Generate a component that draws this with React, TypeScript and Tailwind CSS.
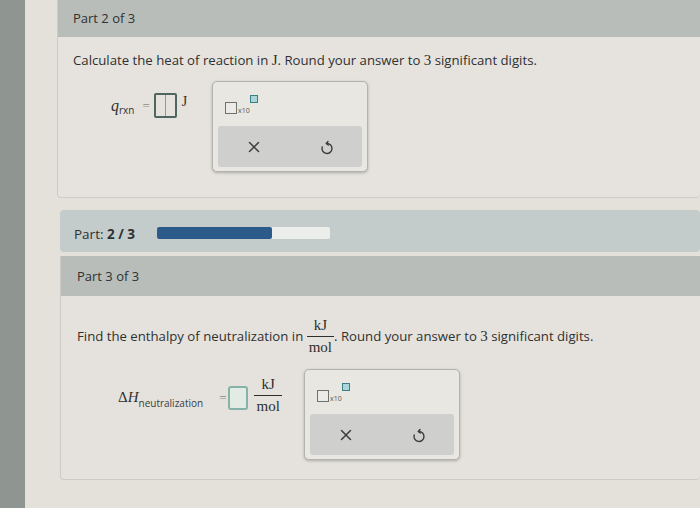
import React from "react";

const sans = { fontFamily: '"Open Sans", "DejaVu Sans", sans-serif' };
const serif = { fontFamily: '"Liberation Serif", "DejaVu Serif", serif' };

function UndoIcon() {
  return (
    <svg width="14" height="16" viewBox="0 0 14 16" fill="none" stroke="#3a3d3c" strokeWidth="1.4" strokeLinecap="round" strokeLinejoin="round">
      <path d="M6.5 4.5 A5 5 0 1 1 2.2 8" />
      <path d="M8 2.5 L6.3 4.5 L8.3 6" />
    </svg>
  );
}

function CloseIcon() {
  return (
    <svg width="12" height="12" viewBox="0 0 12 12" stroke="#3a3d3c" strokeWidth="1.5" strokeLinecap="round">
      <path d="M1.5 1.5 L10.5 10.5 M10.5 1.5 L1.5 10.5" />
    </svg>
  );
}

function TimesTenIcon() {
  return (
    <div className="relative w-[34px] h-[20px]">
      <div className="absolute left-0 bottom-[1px] w-[12px] h-[12px] border border-[#6e7370] bg-[#ecebe7]" />
      <span className="absolute left-[13px] bottom-[1px] text-[7px] leading-none text-[#555]" style={sans}>x10</span>
      <div className="absolute left-[25px] top-0 w-[8px] h-[8px] border border-[#3d7f86] bg-[#a9d6d8]" />
    </div>
  );
}

function ToolBox() {
  return (
    <div className="w-[156px] h-[91px] rounded-[5px] border border-[#b3b4b0] bg-[#e9e7e2] shadow-[0_1px_3px_rgba(0,0,0,0.25)] flex flex-col px-[5px] pb-[4px]">
      <div className="flex-1 flex items-center pl-[7px] pt-[2px]">
        <TimesTenIcon />
      </div>
      <div className="h-[41px] rounded-[3px] bg-[#cfd0cd] flex items-center justify-between pl-[30px] pr-[28px]">
        <CloseIcon />
        <UndoIcon />
      </div>
    </div>
  );
}

function Frac({ top, bottom }: { top: string; bottom: string }) {
  return (
    <span className="inline-flex flex-col items-center leading-none text-[#2d2f2e]" style={serif}>
      <span className="text-[15px] px-[2px] pb-[3px]">{top}</span>
      <span className="h-px w-full bg-[#2d2f2e]" />
      <span className="text-[15px] px-[2px] pt-[3px]">{bottom}</span>
    </span>
  );
}

export default function App() {
  return (
    <div className="w-[700px] h-[508px] flex bg-[#e4e1db] overflow-hidden text-[#2f3130]" style={sans}>
      <div className="w-[25px] shrink-0 bg-[#8f9591]" />
      <div className="flex-1 flex flex-col">
        {/* Part 2 card */}
        <div className="ml-[32px] h-[198px] flex flex-col rounded-b-[4px] border-b border-l border-[#cfcbc4] bg-[#e6e3de]">
          <div className="h-[37px] bg-[#b9bdba] flex items-center pl-[15px] text-[13px]">Part 2 of 3</div>
          <div className="flex-1 flex flex-col pl-[15px] pt-[14px]">
            <p className="text-[13.2px] leading-[18px]">
              Calculate the heat of reaction in <span className="text-[15px]" style={serif}>J</span>. Round your answer to <span className="text-[15px]" style={serif}>3</span> significant digits.
            </p>
            <div className="flex items-start mt-[12px]">
              <div className="w-[139px] flex items-center pl-[38px] pt-[12px]">
                <span className="italic text-[16px]" style={serif}>q</span>
                <span className="text-[10px] mt-[9px]">rxn</span>
                <span className="text-[#8a8d8a] text-[13px] ml-[8px] mr-[4px]" style={serif}>=</span>
                <span className="w-[23px] h-[25px] border-2 border-[#4d6660] rounded-[2px] flex justify-center">
                  <span className="w-px h-full bg-[#8d9c98]" />
                </span>
                <span className="text-[14px] ml-[5px] -mt-[8px]" style={serif}>J</span>
              </div>
              <ToolBox />
            </div>
          </div>
        </div>

        {/* Progress bar */}
        <div className="ml-[35px] mt-[12px] h-[42px] rounded-[4px] bg-[#c3cbcb] flex items-center pl-[14px] pt-[6px]">
          <span className="text-[13.5px]">Part: <b>2 / 3</b></span>
          <div className="ml-[22px] w-[173px] h-[12px] bg-[#eceeec] rounded-[2px] -mt-[2px]">
            <div className="h-full rounded-[2px] bg-[#2b5a8b]" style={{ width: "66.6%" }} />
          </div>
        </div>

        {/* Part 3 card */}
        <div className="ml-[35px] mt-[4px] h-[224px] flex flex-col rounded-b-[4px] border-b border-l border-[#cfcbc4] bg-[#e5e2dd]">
          <div className="h-[40px] bg-[#b8bdba] flex items-center pl-[16px] pt-[2px] text-[13px]">Part 3 of 3</div>
          <div className="flex-1 flex flex-col pl-[16px] pt-[22px]">
            <div className="flex items-center text-[13.2px]">
              <span>Find the enthalpy of neutralization in&nbsp;</span>
              <Frac top="kJ" bottom="mol" />
              <span>. Round your answer to <span className="text-[15px]" style={serif}>3</span> significant digits.</span>
            </div>
            <div className="flex items-start mt-[4px]">
              <div className="w-[227px] flex items-center pl-[41px] pt-[12px]">
                <span className="text-[15px]" style={serif}>Δ<i>H</i></span>
                <span className="text-[10px] mt-[12px] text-[#3a3c3b]">neutralization</span>
                <span className="text-[#8a8d8a] text-[13px] ml-[16px] mr-[2px]" style={serif}>=</span>
                <span className="w-[20px] h-[24px] border-2 border-[#86b3a9] bg-[#e3ebe5] rounded-[3px]" />
                <span className="ml-[6px] mb-[10px]"><Frac top="kJ" bottom="mol" /></span>
              </div>
              <div className="mt-[10px]">
                <ToolBox />
              </div>
            </div>
          </div>
        </div>
      </div>
    </div>
  );
}
